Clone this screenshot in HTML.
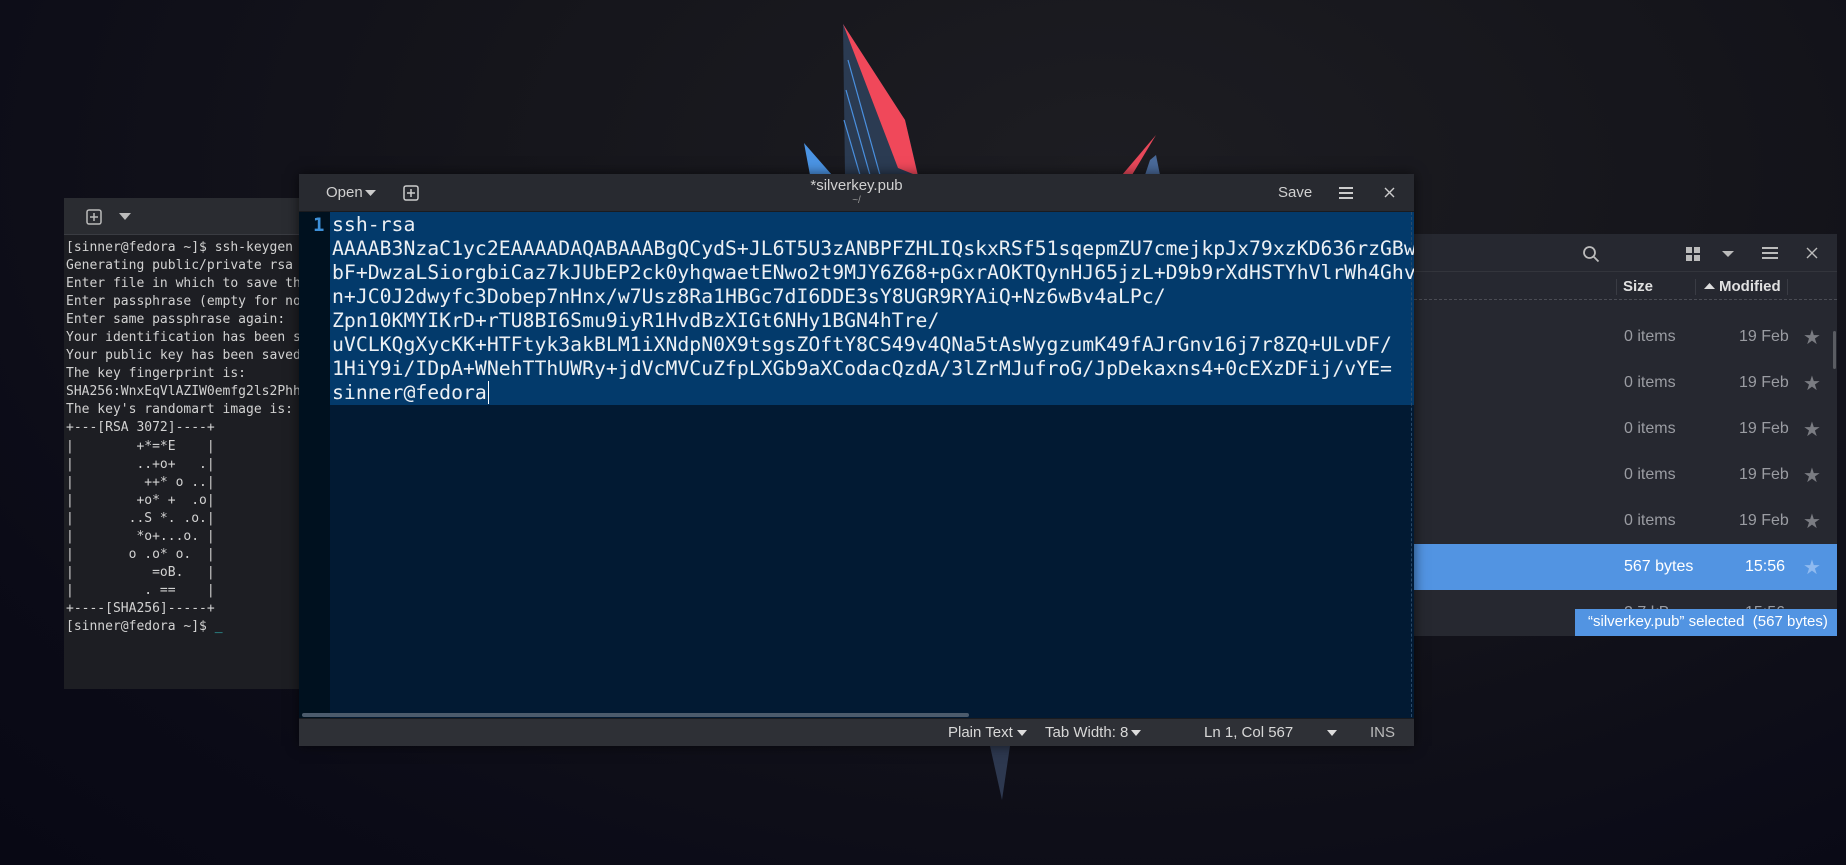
<!DOCTYPE html>
<html><head><meta charset="utf-8">
<style>
*{margin:0;padding:0;box-sizing:border-box}
html,body{width:1846px;height:865px;overflow:hidden}
body{background:radial-gradient(ellipse at 60% 20%,#1d1d22 0%,#15151b 40%,#0b0b17 80%,#080814 100%);position:relative;font-family:"Liberation Sans","DejaVu Sans",sans-serif}
.abs{position:absolute}
#term{left:64px;top:198px;width:240px;height:491px;background:#1d1e23;overflow:hidden}
#term .hd{height:37px;background:#2a2c31;border-bottom:1px solid #3a3c42}
#term pre{position:absolute;left:2px;top:41px;font-family:"DejaVu Sans Mono","Liberation Mono",monospace;font-size:13px;line-height:18.05px;color:#d2d2d2;white-space:pre}
#ed{left:299px;top:174px;width:1115px;height:572px;background:#021a33;overflow:hidden;box-shadow:0 0 12px rgba(0,0,0,.6)}
#ed .hd{position:absolute;left:0;top:0;width:100%;height:38px;background:#282a30;border-bottom:1px solid #1a1b1f;color:#d0d0d0;font-size:15px}
#ed .gut{position:absolute;left:0;top:38px;width:31px;height:534px;background:#00111f}
#ed .sel{position:absolute;left:31px;top:38px;width:1084px;height:193px;background:#033a6b}
#ed pre{position:absolute;left:33px;top:39px;font-family:"DejaVu Sans Mono","Liberation Mono",monospace;font-size:19.8px;line-height:24px;color:#ecf0f4;white-space:pre}
#ed .sb{position:absolute;left:0;bottom:0;width:100%;height:28px;background:#2e3036;border-top:1px solid #1a1b1f;color:#d8d8d8;font-size:15px}
#fm{left:1414px;top:234px;width:423px;height:402px;background:#262830;overflow:hidden}
.row{position:absolute;left:0;width:423px;height:46px;color:#9a9ca2;font-size:16px}
.row span{position:absolute;top:14px}
</style></head><body>

<svg class="abs" style="left:0;top:0" width="1846" height="865">
  <polygon points="843,24 845,175 918,175 905,120" fill="#2b3b52"/>
  <polygon points="843,24 905,120 918,176 898,168" fill="#f0485a"/>
  <line x1="848" y1="60" x2="880" y2="175" stroke="#4a90e0" stroke-width="1.2"/>
  <line x1="846" y1="90" x2="870" y2="175" stroke="#4a90e0" stroke-width="1.2"/>
  <line x1="844" y1="120" x2="860" y2="175" stroke="#4a90e0" stroke-width="1.2"/>
  <polygon points="804,143 832,175 810,175" fill="#4b94e4"/>
  <polygon points="1156,135 1122,175 1132,175" fill="#e8485a"/>
  <polygon points="1150,160 1145,175 1160,175 1156,155" fill="#4a6a9a"/>
  <polygon points="990,746 1010,746 1002,800" fill="#3a4a66" opacity=".7"/>
</svg>

<div id="term" class="abs">
  <div class="hd">
    <svg class="abs" style="left:22px;top:11px" width="16" height="16"><rect x="1" y="1" width="14" height="14" rx="2" fill="none" stroke="#bbb" stroke-width="1.5"/><path d="M8 4v8M4 8h8" stroke="#bbb" stroke-width="1.5"/></svg>
    <svg class="abs" style="left:55px;top:15px" width="12" height="8"><path d="M0 0h12L6 7z" fill="#bbb"/></svg>
  </div>
<pre>[sinner@fedora ~]$ ssh-keygen
Generating public/private rsa
Enter file in which to save th
Enter passphrase (empty for no
Enter same passphrase again:
Your identification has been s
Your public key has been saved
The key fingerprint is:
SHA256:WnxEqVlAZIW0emfg2ls2Phh
The key's randomart image is:
+---[RSA 3072]----+
|        +*=*E    |
|        ..+o+   .|
|         ++* o ..|
|        +o* +  .o|
|       ..S *. .o.|
|        *o+...o. |
|       o .o* o.  |
|          =oB.   |
|         . ==    |
+----[SHA256]-----+
[sinner@fedora ~]$ <span style="color:#3cc">_</span></pre>
</div>

<div id="fm" class="abs">
  <div style="position:absolute;left:0;top:0;width:423px;height:38px;border-bottom:1px solid #33353c"></div>
  <svg class="abs" style="left:168px;top:11px" width="18" height="18"><circle cx="7.5" cy="7.5" r="5.5" fill="none" stroke="#bbb" stroke-width="1.8"/><path d="M11.5 11.5l5 5" stroke="#bbb" stroke-width="1.8"/></svg>
  <svg class="abs" style="left:271px;top:12px" width="16" height="16" fill="#bbb"><rect x="1" y="1" width="6" height="6"/><rect x="9" y="1" width="6" height="6"/><rect x="1" y="9" width="6" height="6"/><rect x="9" y="9" width="6" height="6"/></svg>
  <svg class="abs" style="left:308px;top:17px" width="12" height="7"><path d="M0 0h12L6 6z" fill="#bbb"/></svg>
  <svg class="abs" style="left:348px;top:12px" width="16" height="14" fill="#bbb"><rect y="1" width="16" height="2"/><rect y="6" width="16" height="2"/><rect y="11" width="16" height="2"/></svg>
  <svg class="abs" style="left:392px;top:13px" width="12" height="12"><path d="M1 1l10 10M11 1L1 11" stroke="#bbb" stroke-width="1.4"/></svg>
  <div class="abs" style="left:202px;top:45px;width:1px;height:16px;background:#3a3c44"></div>
  <div class="abs" style="left:209px;top:44px;color:#e0e0e0;font-weight:bold;font-size:15px">Size</div>
  <div class="abs" style="left:281px;top:45px;width:1px;height:16px;background:#3a3c44"></div>
  <svg class="abs" style="left:290px;top:49px" width="11" height="7"><path d="M0 6h11L5.5 0z" fill="#ddd"/></svg>
  <div class="abs" style="left:305px;top:44px;color:#e0e0e0;font-weight:bold;font-size:15px">Modified</div>
  <div class="abs" style="left:373px;top:45px;width:1px;height:16px;background:#3a3c44"></div>
  <div class="abs" style="left:0;top:65px;width:423px;border-top:1px dashed #4a4c54"></div>
  <div class="row" style="top:80px"><span style="left:210px">0 items</span><span style="left:325px">19 Feb</span><span style="left:389px;top:11px;font-size:20px;color:#7a7c82">★</span></div>
  <div class="row" style="top:126px"><span style="left:210px">0 items</span><span style="left:325px">19 Feb</span><span style="left:389px;top:11px;font-size:20px;color:#7a7c82">★</span></div>
  <div class="row" style="top:172px"><span style="left:210px">0 items</span><span style="left:325px">19 Feb</span><span style="left:389px;top:11px;font-size:20px;color:#7a7c82">★</span></div>
  <div class="row" style="top:218px"><span style="left:210px">0 items</span><span style="left:325px">19 Feb</span><span style="left:389px;top:11px;font-size:20px;color:#7a7c82">★</span></div>
  <div class="row" style="top:264px"><span style="left:210px">0 items</span><span style="left:325px">19 Feb</span><span style="left:389px;top:11px;font-size:20px;color:#7a7c82">★</span></div>
  <div class="row" style="top:310px;background:#5294e2;color:#fff"><span style="left:210px">567 bytes</span><span style="left:331px">15:56</span><span style="left:389px;top:11px;font-size:20px;color:#8fbaf0">★</span></div>
  <div class="row" style="top:356px"><span style="left:210px">2.7 kB</span><span style="left:331px">15:56</span></div>
  <div class="abs" style="left:419px;top:97px;width:3px;height:38px;background:#5a5c62;border-radius:2px"></div>
  <div class="abs" style="left:161px;top:375px;width:262px;height:27px;background:#5294e2;color:#fff;font-size:15px;padding:4px 0 0 13px">“silverkey.pub” selected&nbsp; (567 bytes)</div>
</div>

<div id="ed" class="abs">
  <div class="hd">
    <span class="abs" style="left:27px;top:10px">Open</span>
    <svg class="abs" style="left:66px;top:16px" width="11" height="7"><path d="M0 0h11L5.5 6z" fill="#ccc"/></svg>
    <svg class="abs" style="left:104px;top:11px" width="16" height="16"><rect x="1" y="1" width="14" height="14" rx="2" fill="none" stroke="#ccc" stroke-width="1.5"/><path d="M8 4v8M4 8h8" stroke="#ccc" stroke-width="1.5"/></svg>
    <span class="abs" style="left:510px;top:3px;width:95px;text-align:center;font-size:15px">*silverkey.pub</span>
    <span class="abs" style="left:510px;top:21px;width:95px;text-align:center;font-size:10px;color:#999">~/</span>
    <span class="abs" style="left:979px;top:10px">Save</span>
    <svg class="abs" style="left:1040px;top:12px" width="14" height="14" fill="#ccc"><rect y="1" width="14" height="2"/><rect y="6" width="14" height="2"/><rect y="11" width="14" height="2"/></svg>
    <svg class="abs" style="left:1085px;top:13px" width="11" height="11"><path d="M1 1l9 9M10 1L1 10" stroke="#ccc" stroke-width="1.4"/></svg>
  </div>
  <div class="gut"></div>
  <div class="abs" style="left:14px;top:39px;font-family:'DejaVu Sans Mono',monospace;font-size:19px;line-height:24px;color:#3d8fd6;font-weight:bold">1</div>
  <div class="sel"></div>
  <div class="abs" style="left:1112px;top:38px;height:510px;border-left:1px dashed #2a4a6a"></div>
<pre>ssh-rsa
AAAAB3NzaC1yc2EAAAADAQABAAABgQCydS+JL6T5U3zANBPFZHLIQskxRSf51sqepmZU7cmejkpJx79xzKD636rzGBw
bF+DwzaLSiorgbiCaz7kJUbEP2ck0yhqwaetENwo2t9MJY6Z68+pGxrAOKTQynHJ65jzL+D9b9rXdHSTYhVlrWh4Ghv
n+JC0J2dwyfc3Dobep7nHnx/w7Usz8Ra1HBGc7dI6DDE3sY8UGR9RYAiQ+Nz6wBv4aLPc/
Zpn10KMYIKrD+rTU8BI6Smu9iyR1HvdBzXIGt6NHy1BGN4hTre/
uVCLKQgXycKK+HTFtyk3akBLM1iXNdpN0X9tsgsZOftY8CS49v4QNa5tAsWygzumK49fAJrGnv16j7r8ZQ+ULvDF/
1HiY9i/IDpA+WNehTThUWRy+jdVcMVCuZfpLXGb9aXCodacQzdA/3lZrMJufroG/JpDekaxns4+0cEXzDFij/vYE=
sinner@fedora<span style="border-left:1.5px solid #fff;margin-left:1px"></span></pre>
  <div class="abs" style="left:3px;top:539px;width:667px;height:4px;background:#4c5b6c;border-radius:2px"></div>
  <div class="sb">
    <span class="abs" style="left:649px;top:5px">Plain Text</span>
    <svg class="abs" style="left:718px;top:11px" width="10" height="6"><path d="M0 0h10L5 6z" fill="#ddd"/></svg>
    <span class="abs" style="left:746px;top:5px">Tab Width: 8</span>
    <svg class="abs" style="left:832px;top:11px" width="10" height="6"><path d="M0 0h10L5 6z" fill="#ddd"/></svg>
    <span class="abs" style="left:905px;top:5px">Ln 1, Col 567</span>
    <svg class="abs" style="left:1028px;top:11px" width="10" height="6"><path d="M0 0h10L5 6z" fill="#ddd"/></svg>
    <span class="abs" style="left:1071px;top:5px;color:#bbb">INS</span>
  </div>
</div>

</body></html>
